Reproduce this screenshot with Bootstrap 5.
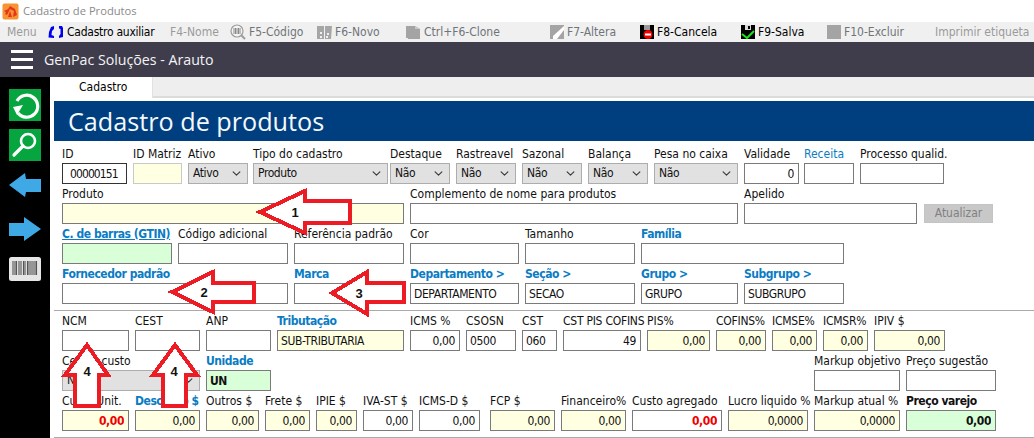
<!DOCTYPE html>
<html lang="pt-BR">
<head>
<meta charset="utf-8"/>
<meta content="width=device-width, initial-scale=1.0" name="viewport"/>
<title>Cadastro de Produtos</title>
<link href="https://cdn.jsdelivr.net/npm/bootstrap@5.3.0/dist/css/bootstrap.min.css" rel="stylesheet"/>
<style>
    html, body { width: 1034px; height: 438px; overflow: hidden; background: #fff; }
    body { position: relative; font-family: "DejaVu Sans", sans-serif; font-stretch: condensed; font-size: 12px; color: #111; }
    .titlebar { height: 22px; padding-left: 2px; gap: 4px; font-family: "Open Sans", sans-serif; font-stretch: normal; color: #8a8a8a; font-size: 11.2px; }
    .toolbar { height: 20px; padding-left: 7px; background: #f0f0f0; color: #9a9a9a; white-space: nowrap; }
    .toolbar > div { display: flex; align-items: center; gap: 3px; }
    .on { color: #000; }
    .dim { color: #6f7478; }
    .aux { letter-spacing: -0.25px; }
    .t41 { width: 41px; } .t122 { width: 122px; } .t60 { width: 60px; } .t87 { width: 87px; }
    .t89 { width: 89px; } .t144 { width: 144px; } .t90 { width: 90px; } .t101 { width: 101px; }
    .t86 { width: 86px; } .t108 { width: 108px; }
    .topbar { height: 35px; padding: 0 0 0 11px; background: #3f3d4c; justify-content: flex-start; flex-wrap: nowrap; gap: 11px; }
    .burger { width: 22px; height: 19px; display: flex; flex-direction: column; justify-content: space-between; }
    .burger i { height: 3px; background: #fff; display: block; }
    .topbar .navbar-brand { margin: 0; padding: 0; color: #f4f4f4; font-family: "Open Sans", sans-serif; font-stretch: normal; font-size: 14.2px; }
    .sidebar { width: 50px; height: 361px; background: #000; padding: 12px 0 0 9px; gap: 8px; flex: none; }
    .sidebar svg { display: block; }
    .sidebar .navarrow { margin-top: 4px; margin-bottom: 8px; }
    .mainarea { width: 984px; }
    .tabstrip { height: 21px; background: #eee; border-bottom: 2px solid #dcdcdc; }
    .tabstrip .nav-link { width: 103px; height: 21px; padding: 1px 0 0 29px; color: #111; border: 0; border-radius: 0; background: #fff; border-right: 1px solid #dcdcdc; font-size: 12px; }
    .pagehead { margin: 3px 0 0 4px; height: 40px; padding-left: 14px; background: #003f7f; color: #f5f8fb; font-family: "Open Sans", sans-serif; font-stretch: normal; font-size: 25.2px; line-height: 40px; }
    .formarea { padding: 3px 0 0 12px; }
    .rowline { display: flex; gap: 6px; height: 40px; }
    .fld label { display: block; height: 19px; line-height: 19px; padding-top: 1px; margin: 0; white-space: nowrap; }
    .fld .form-control, .fld .form-select { height: 21px; min-height: 21px; padding: 0 3px; font-size: 12px; font-stretch: condensed; letter-spacing: -0.4px; line-height: 19px; color: #111; border: 1px solid #7a7a7a; border-radius: 0; box-shadow: none; }
    .fld .form-select { background-color: #e1e1e1; border-color: #adadad; padding-left: 4px; background-position: right 5px center; background-size: 11px 9px; }
    .fld .focused { border-color: #333; padding-left: 7px; letter-spacing: -0.9px; }
    .fld .pale { border-color: #c9c9c9; }
    .ylw { background: #ffffe1 !important; }
    .grn { background: #d9ffd9 !important; }
    .rgt { text-align: right; padding-right: 4px !important; }
    .redv { color: #f00000 !important; font-weight: 700; }
    .strong { font-weight: 700; }
    label.strong { letter-spacing: -0.45px; }
    .lnk { color: #0a7cc4; font-weight: 700; letter-spacing: -0.45px; }
    .lnk-r { color: #0a7cc4; }
    .lnk-u { text-decoration: underline; }
    .snug { letter-spacing: -0.25px; }
    .sep { margin: 6px 0 0 -8px; border-top: 1px solid #aaa; height: 1px; width: 980px; }
    .savebtn { width: 69px; height: 19px; margin: 20px 0 0 1px; padding: 0; font-size: 12px; font-stretch: condensed; line-height: 17px; border-radius: 0; border: 1px solid #c4c4c4; background: #c8c8c8; color: #808080; }
    .btn.savebtn:disabled { background: #c8c8c8; border-color: #c4c4c4; color: #808080; opacity: 1; }
    .m1 { margin-left: -1px; } .m4 { margin-left: -4px; } .p4 { margin-left: 4px; } .m5 { margin-left: 537px; }
    .w35 { width: 35px; } .w41 { width: 41px; } .w45 { width: 45px; } .w49 { width: 49px; } .w50 { width: 50px; } .w53 { width: 53px; }
    .w55 { width: 55px; } .w60 { width: 60px; } .w61 { width: 61px; } .w63 { width: 63px; } .w65 { width: 65px; } .w67 { width: 67px; }
    .w71 { width: 71px; } .w78 { width: 78px; } .w80 { width: 80px; } .w84 { width: 84px; } .w86 { width: 86px; } .w90 { width: 90px; }
    .w97 { width: 97px; } .w100 { width: 100px; } .w109 { width: 109px; } .w110 { width: 110px; } .w127 { width: 127px; }
    .w135 { width: 135px; } .w138 { width: 138px; } .w173 { width: 173px; } .w203 { width: 203px; } .w226 { width: 226px; }
    .w328 { width: 328px; } .w342 { width: 342px; }
    .callouts { position: absolute; left: 0; top: 0; pointer-events: none; }
    .callouts polygon { fill: #fff; stroke: #ed1c24; stroke-width: 4; stroke-linejoin: miter; shape-rendering: crispEdges; }
    .callouts text { font-family: "Liberation Sans", sans-serif; font-weight: 700; font-size: 13px; fill: #111; text-anchor: middle; font-stretch: normal; }
</style>
</head>
<body>

<div class="titlebar d-flex align-items-center">
  <svg width="17" height="17" viewBox="0 0 17 17"><rect x="0.5" y="0.5" width="16" height="16" rx="2" fill="#f79331"/><path d="M3 11 L8 3 L13 6 L15 12 L11 14 L12 8 L8 6 L5 12 Z" fill="#e4351c"/><path d="M2 8 L6 6 L5 10 Z M8 8 L10 14 L6 14 Z" fill="#e4351c"/></svg>
  <span>Cadastro de Produtos</span>
</div>

<div class="toolbar d-flex align-items-stretch">
  <div class="t41">Menu</div>
  <div class="t122 on">
    <svg width="16" height="14" viewBox="0 0 16 14"><path d="M6 1 L3 2 L1 7 L0.5 12.5 L6 13 L6 11 L3.5 10 L4 6 L6 4 Z M11 1 L14 1 L15 3 L15 12 L11 13 L11 11 L12.5 9 L12.5 4 L11 3.5 Z" fill="#0000f0"/></svg>
    <span class="aux">Cadastro auxiliar</span>
  </div>
  <div class="t60">F4-Nome</div>
  <div class="t87 dim">
    <svg width="16" height="16" viewBox="0 0 16 16"><circle cx="7" cy="7" r="6" fill="#f4f4f4" stroke="#9c9c9c" stroke-width="1.2"/><path d="M4 4v6M5.5 4v6M7 4v6M8.5 4v6M10 4v6" stroke="#8a8a8a"/><path d="M11 11l4 4" stroke="#9c9c9c" stroke-width="2"/></svg>
    <span>F5-Código</span>
  </div>
  <div class="t89 dim">
    <svg width="15" height="14" viewBox="0 0 15 14"><rect x="0" y="1" width="7" height="13" fill="#a6a6a6"/><path d="M8 1h7l-1 13H8z" fill="#a6a6a6"/><path d="M3 7h2v2H3zM3 11h2v2H3zM10 8h2v2h-2zM9 11h2v2H9z" fill="#f0f0f0"/></svg>
    <span>F6-Novo</span>
  </div>
  <div class="t144 dim">
    <svg width="15" height="14" viewBox="0 0 15 14"><path d="M0 1h9l5 3v10H2v-1H0z" fill="#a4a4a4"/><path d="M9 1l5 3H9z" fill="#c8c8c8"/></svg>
    <span>Ctrl+F6-Clone</span>
  </div>
  <div class="t90 dim">
    <svg width="14" height="14" viewBox="0 0 14 14"><rect width="14" height="14" fill="#a4a4a4"/><path d="M14 1 L14 5 L7 14 L3 14 L3 11 Z" fill="#fff"/></svg>
    <span>F7-Altera</span>
  </div>
  <div class="t101 on">
    <svg width="14" height="14" viewBox="0 0 14 14"><rect width="14" height="14" fill="#000"/><rect x="4" y="0" width="6" height="5" fill="#9a9a9a"/><circle cx="8" cy="9.5" r="4.5" fill="#f00000"/><rect x="5" y="8.5" width="6" height="2" fill="#fff"/></svg>
    <span>F8-Cancela</span>
  </div>
  <div class="t86 on">
    <svg width="14" height="14" viewBox="0 0 14 14"><rect width="14" height="14" fill="#000"/><rect x="4" y="0" width="6" height="5" fill="#d8d8d8"/><rect x="7" y="1" width="2" height="3" fill="#000"/><path d="M1 9l5 4 7-7" fill="none" stroke="#19e619" stroke-width="2"/></svg>
    <span>F9-Salva</span>
  </div>
  <div class="t108 dim">
    <svg width="14" height="14" viewBox="0 0 14 14"><rect width="14" height="14" fill="#a4a4a4"/></svg>
    <span>F10-Excluir</span>
  </div>
  <div>Imprimir etiqueta</div>
</div>

<nav class="navbar topbar">
  <div class="burger"><i></i><i></i><i></i></div>
  <span class="navbar-brand">GenPac Soluções - Arauto</span>
</nav>

<div class="d-flex">
  <div class="sidebar d-flex flex-column">
    <svg width="32" height="32" viewBox="0 0 32 32"><rect width="32" height="32" fill="#07a53f"/><path d="M8 12 A11 11 0 1 1 9 24" fill="none" stroke="#fff" stroke-width="3.2"/><path d="M4 18 L14 16 L8 26 Z" fill="#fff"/></svg>
    <svg width="32" height="32" viewBox="0 0 32 32"><rect width="32" height="32" fill="#07a53f"/><circle cx="19" cy="12" r="7" fill="none" stroke="#fff" stroke-width="2.6"/><path d="M14 17 L5 26" stroke="#fff" stroke-width="3.2" stroke-linecap="round"/></svg>
    <svg class="navarrow" width="32" height="24" viewBox="0 0 32 24"><polygon points="0,12 16,0 17,6 32,6 32,19 17,19 16,24" fill="#3fa9e6"/></svg>
    <svg class="navarrow" width="32" height="24" viewBox="0 0 32 24"><polygon points="32,12 15,0 15,6 0,6 0,19 15,19 15,24" fill="#3fa9e6"/></svg>
    <svg width="32" height="24" viewBox="0 0 32 24"><rect width="32" height="24" rx="2.5" fill="#e6e6e6"/><path d="M4 4v14M6 4v14M7.5 4v14M10 4v14M12 4v14M14.5 4v14M16 4v14M18.5 4v14M20 4v14M22 4v14M24 4v14M26 4v14M27.5 4v14" stroke="#555" stroke-width="1.1"/></svg>
  </div>

  <div class="mainarea">
    <ul class="nav nav-tabs tabstrip">
      <li class="nav-item"><a class="nav-link active" href="#">Cadastro</a></li>
    </ul>
    <div class="pagehead">Cadastro de produtos</div>

    <div class="formarea">
      <div class="rowline">
        <div class="fld w65"><label>ID</label><input class="form-control focused" value="00000151"/></div>
        <div class="fld w49"><label>ID Matriz</label><input class="form-control pale ylw"/></div>
        <div class="fld w60"><label>Ativo</label><select class="form-select"><option>Ativo</option></select></div>
        <div class="fld w135 m1"><label>Tipo do cadastro</label><select class="form-select"><option>Produto</option></select></div>
        <div class="fld w60 m4"><label>Destaque</label><select class="form-select"><option>Não</option></select></div>
        <div class="fld w60"><label>Rastreavel</label><select class="form-select"><option>Não</option></select></div>
        <div class="fld w60"><label>Sazonal</label><select class="form-select"><option>Não</option></select></div>
        <div class="fld w60"><label>Balança</label><select class="form-select"><option>Não</option></select></div>
        <div class="fld w84"><label>Pesa no caixa</label><select class="form-select"><option>Não</option></select></div>
        <div class="fld w55"><label>Validade</label><input class="form-control rgt" value="0"/></div>
        <div class="fld w50 m1"><label class="lnk-r">Receita</label><input class="form-control"/></div>
        <div class="fld w84"><label>Processo qualid.</label><input class="form-control"/></div>
      </div>
      <div class="rowline">
        <div class="fld w342"><label>Produto</label><input class="form-control ylw"/></div>
        <div class="fld w328"><label>Complemento de nome para produtos</label><input class="form-control"/></div>
        <div class="fld w173"><label>Apelido</label><input class="form-control"/></div>
        <button class="btn savebtn" disabled>Atualizar</button>
      </div>
      <div class="rowline">
        <div class="fld w110"><label class="lnk lnk-u">C. de barras (GTIN)</label><input class="form-control grn"/></div>
        <div class="fld w110"><label>Código adicional</label><input class="form-control"/></div>
        <div class="fld w110"><label>Referência padrão</label><input class="form-control"/></div>
        <div class="fld w109"><label>Cor</label><input class="form-control"/></div>
        <div class="fld w110"><label>Tamanho</label><input class="form-control"/></div>
        <div class="fld w203"><label class="lnk">Família</label><input class="form-control"/></div>
      </div>
      <div class="rowline">
        <div class="fld w226"><label class="lnk">Fornecedor padrão</label><input class="form-control"/></div>
        <div class="fld w110"><label class="lnk">Marca</label><input class="form-control"/></div>
        <div class="fld w109"><label class="lnk">Departamento &gt;</label><input class="form-control" value="DEPARTAMENTO"/></div>
        <div class="fld w110"><label class="lnk">Seção &gt;</label><input class="form-control" value="SECAO"/></div>
        <div class="fld w97"><label class="lnk">Grupo &gt;</label><input class="form-control" value="GRUPO"/></div>
        <div class="fld w100"><label class="lnk">Subgrupo &gt;</label><input class="form-control" value="SUBGRUPO"/></div>
      </div>
      <div class="sep"></div>
      <div class="rowline">
        <div class="fld w67"><label>NCM</label><input class="form-control"/></div>
        <div class="fld w65"><label>CEST</label><input class="form-control"/></div>
        <div class="fld w65"><label>ANP</label><input class="form-control"/></div>
        <div class="fld w127"><label class="lnk">Tributação</label><input class="form-control ylw" value="SUB-TRIBUTARIA"/></div>
        <div class="fld w50"><label>ICMS %</label><input class="form-control rgt" value="0,00"/></div>
        <div class="fld w50"><label>CSOSN</label><input class="form-control" value="0500"/></div>
        <div class="fld w35"><label>CST</label><input class="form-control" value="060"/></div>
        <div class="fld w78"><label class="snug">CST PIS COFINS</label><input class="form-control rgt" value="49"/></div>
        <div class="fld w63"><label>PIS%</label><input class="form-control rgt ylw" value="0,00"/></div>
        <div class="fld w50"><label class="snug">COFINS%</label><input class="form-control rgt ylw" value="0,00"/></div>
        <div class="fld w45"><label class="snug">ICMSE%</label><input class="form-control rgt ylw" value="0,00"/></div>
        <div class="fld w45"><label class="snug">ICMSR%</label><input class="form-control rgt ylw" value="0,00"/></div>
        <div class="fld w71"><label>IPIV $</label><input class="form-control rgt ylw" value="0,00"/></div>
      </div>
      <div class="rowline">
        <div class="fld w138"><label>Centro custo</label><select class="form-select"><option>Não</option></select></div>
        <div class="fld w65"><label class="lnk">Unidade</label><input class="form-control grn strong" value="UN"/></div>
        <div class="fld w86 m5"><label>Markup objetivo</label><input class="form-control"/></div>
        <div class="fld w90"><label>Preço sugestão</label><input class="form-control"/></div>
      </div>
      <div class="rowline">
        <div class="fld w67"><label>Custo Unit.</label><input class="form-control rgt ylw redv" value="0,00"/></div>
        <div class="fld w65"><label class="lnk">Desconto $</label><input class="form-control rgt ylw" value="0,00"/></div>
        <div class="fld w53"><label>Outros $</label><input class="form-control rgt ylw" value="0,00"/></div>
        <div class="fld w45"><label>Frete $</label><input class="form-control rgt ylw" value="0,00"/></div>
        <div class="fld w41"><label>IPIE $</label><input class="form-control rgt ylw" value="0,00"/></div>
        <div class="fld w50"><label>IVA-ST $</label><input class="form-control rgt" value="0,00"/></div>
        <div class="fld w61"><label>ICMS-D $</label><input class="form-control rgt" value="0,00"/></div>
        <div class="fld w65 p4"><label>FCP $</label><input class="form-control rgt ylw" value="0,00"/></div>
        <div class="fld w65"><label>Financeiro%</label><input class="form-control rgt ylw" value="0,00"/></div>
        <div class="fld w90"><label>Custo agregado</label><input class="form-control rgt redv" value="0,00"/></div>
        <div class="fld w80"><label>Lucro liquido %</label><input class="form-control rgt ylw" value="0,0000"/></div>
        <div class="fld w86"><label>Markup atual %</label><input class="form-control rgt ylw" value="0,0000"/></div>
        <div class="fld w90"><label class="strong">Preço varejo</label><input class="form-control rgt grn strong" value="0,00"/></div>
      </div>
      <div class="sep"></div>
    </div>
  </div>
</div>

<svg class="callouts" width="1034" height="438" viewBox="0 0 1034 438">
  <polygon points="260,212 305,191 305,201 350,201 350,223 305,223 305,233"/>
  <text x="295" y="217">1</text>
  <polygon points="172,292 213,272 213,283 254,283 254,302 213,302 213,312"/>
  <text x="204" y="297">2</text>
  <polygon points="332,293 367,272 367,283 404,283 404,302 367,302 367,314"/>
  <text x="359" y="298">3</text>
  <polygon points="87,345 108,375 99,375 99,406 75,406 75,375 65,375"/>
  <text x="87" y="376">4</text>
  <polygon points="175,345 197,375 186,375 186,406 163,406 163,375 153,375"/>
  <text x="174" y="376">4</text>
</svg>

<script src="https://cdn.jsdelivr.net/npm/bootstrap@5.3.0/dist/js/bootstrap.bundle.min.js"></script>
</body>
</html>
